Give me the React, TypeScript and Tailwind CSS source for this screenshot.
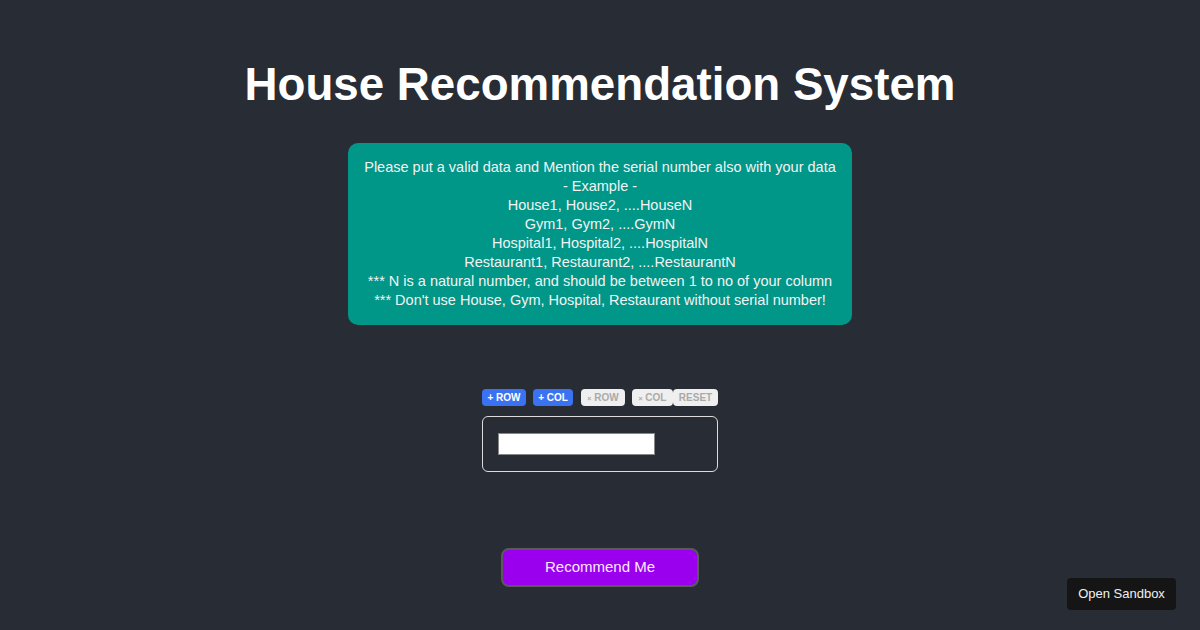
const lines = [
  "Please put a valid data and Mention the serial number also with your data",
  "- Example -",
  "House1, House2, ....HouseN",
  "Gym1, Gym2, ....GymN",
  "Hospital1, Hospital2, ....HospitalN",
  "Restaurant1, Restaurant2, ....RestaurantN",
  "*** N is a natural number, and should be between 1 to no of your column",
  "*** Don't use House, Gym, Hospital, Restaurant without serial number!",
];

export default function App() {
  return (
    <div className="relative min-h-[630px] bg-[#282c34] text-white font-['Liberation_Sans',Arial,sans-serif] flex flex-col items-center">
      <h1 className="mt-[62px] text-[45.7px] leading-[46px] font-bold">House Recommendation System</h1>

      <div className="mt-[35px] w-[504px] rounded-[10px] bg-[#009688] py-[15px] text-center text-[14.5px] leading-[19px] text-[#f3f3f3]">
        {lines.map((l) => (
          <div key={l}>{l}</div>
        ))}
      </div>

      <div className="mt-[64px] flex w-[236px] items-center text-[10px] font-bold leading-none">
        <button className="h-[17px] w-[44px] rounded-[4px] bg-[#3b72f2] text-white">+ ROW</button>
        <button className="ml-[7px] h-[17px] w-[40px] rounded-[4px] bg-[#3b72f2] text-white">+ COL</button>
        <button className="ml-[8px] h-[17px] w-[44px] rounded-[4px] bg-[#efefef] text-[#aaaaaa]">
          <span className="text-[7px]">×</span> ROW
        </button>
        <button className="ml-[7px] h-[17px] w-[41px] rounded-[4px] bg-[#efefef] text-[#aaaaaa]">
          <span className="text-[7px]">×</span> COL
        </button>
        <button className="h-[17px] w-[45px] rounded-[4px] bg-[#efefef] text-[#aaaaaa]">RESET</button>
      </div>

      <div className="mt-[10px] h-[56px] w-[236px] rounded-[6px] border border-[#dcdcdc] px-[15px] pt-[16px]">
        <input className="block h-[22px] w-[157px] border border-[#888] bg-white outline-none" />
      </div>

      <button className="mt-[76px] h-[39px] w-[198px] rounded-[8px] border-2 border-[#5a5a5a] bg-[#9a00ee] text-[15px] text-[#fbeaff]">
        Recommend Me
      </button>

      <div className="absolute bottom-[20px] right-[24px] flex h-[32px] w-[109px] items-center justify-center rounded-[4px] bg-[#151515] text-[13px] text-[#f0f0f0]">
        Open Sandbox
      </div>
    </div>
  );
}
